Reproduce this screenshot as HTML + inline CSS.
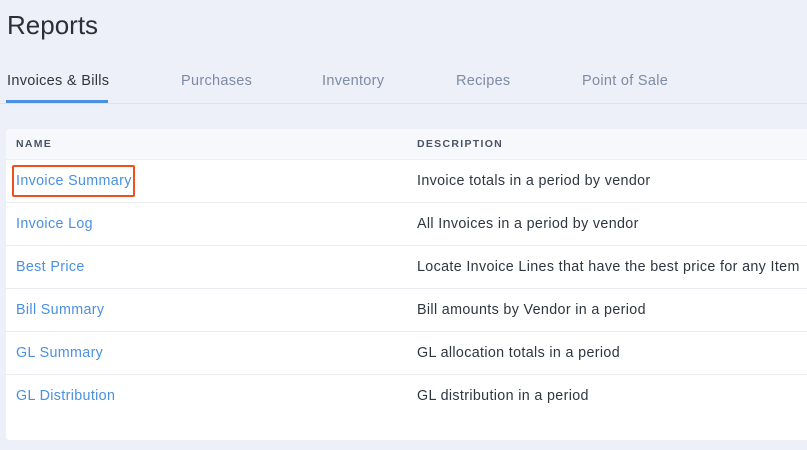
<!DOCTYPE html>
<html><head><style>
body{margin:0;width:807px;height:450px;background:#edf0f8;font-family:"Liberation Sans",sans-serif;position:relative;overflow:hidden}
h1{position:absolute;left:7px;top:10px;margin:0;font-weight:400;font-size:26px;color:#2b2f36}
.tabs{position:absolute;left:0;top:72px;right:0;height:31px;border-bottom:1px solid #dde2ea}
.tab{position:absolute;top:1px;font-size:14.5px;color:#7d8ba3;letter-spacing:0.3px}
.tab.a{color:#2f3640}
.ul{position:absolute;left:6px;top:100px;width:102px;height:3px;background:#4a90e2}
.card{position:absolute;left:6px;top:129px;width:820px;height:311px;background:#fff;border-radius:4px}
.hd{height:30px;background:#f7f8fb;border-bottom:1px solid #eceff4;border-radius:4px 4px 0 0;position:relative}
.hd span{position:absolute;top:9px;font-size:10.5px;font-weight:700;letter-spacing:1.3px;color:#4a5363}
.row{height:42px;border-bottom:1px solid #e8ebf0;position:relative;font-size:14.3px;letter-spacing:0.35px}
.row .n{position:absolute;left:10px;top:13px;color:#4a90e2}
.row .d{position:absolute;left:411px;top:13px;color:#2f3640}
.box{position:absolute;left:12px;top:165px;width:119px;height:28px;border:2px solid #f0501e;border-radius:2px}
</style></head><body>
<h1>Reports</h1>
<div class="tabs">
<span class="tab a" style="left:7px">Invoices &amp; Bills</span>
<span class="tab" style="left:181px">Purchases</span>
<span class="tab" style="left:322px">Inventory</span>
<span class="tab" style="left:456px">Recipes</span>
<span class="tab" style="left:582px">Point of Sale</span>
</div>
<div class="ul"></div>
<div class="card">
<div class="hd"><span style="left:10px">NAME</span><span style="left:411px">DESCRIPTION</span></div>
<div class="row"><span class="n">Invoice Summary</span><span class="d">Invoice totals in a period by vendor</span></div>
<div class="row"><span class="n">Invoice Log</span><span class="d">All Invoices in a period by vendor</span></div>
<div class="row"><span class="n">Best Price</span><span class="d">Locate Invoice Lines that have the best price for any Item</span></div>
<div class="row"><span class="n">Bill Summary</span><span class="d">Bill amounts by Vendor in a period</span></div>
<div class="row"><span class="n">GL Summary</span><span class="d">GL allocation totals in a period</span></div>
<div class="row" style="border-bottom:none"><span class="n">GL Distribution</span><span class="d">GL distribution in a period</span></div>
</div>
<div class="box"></div>
</body></html>
